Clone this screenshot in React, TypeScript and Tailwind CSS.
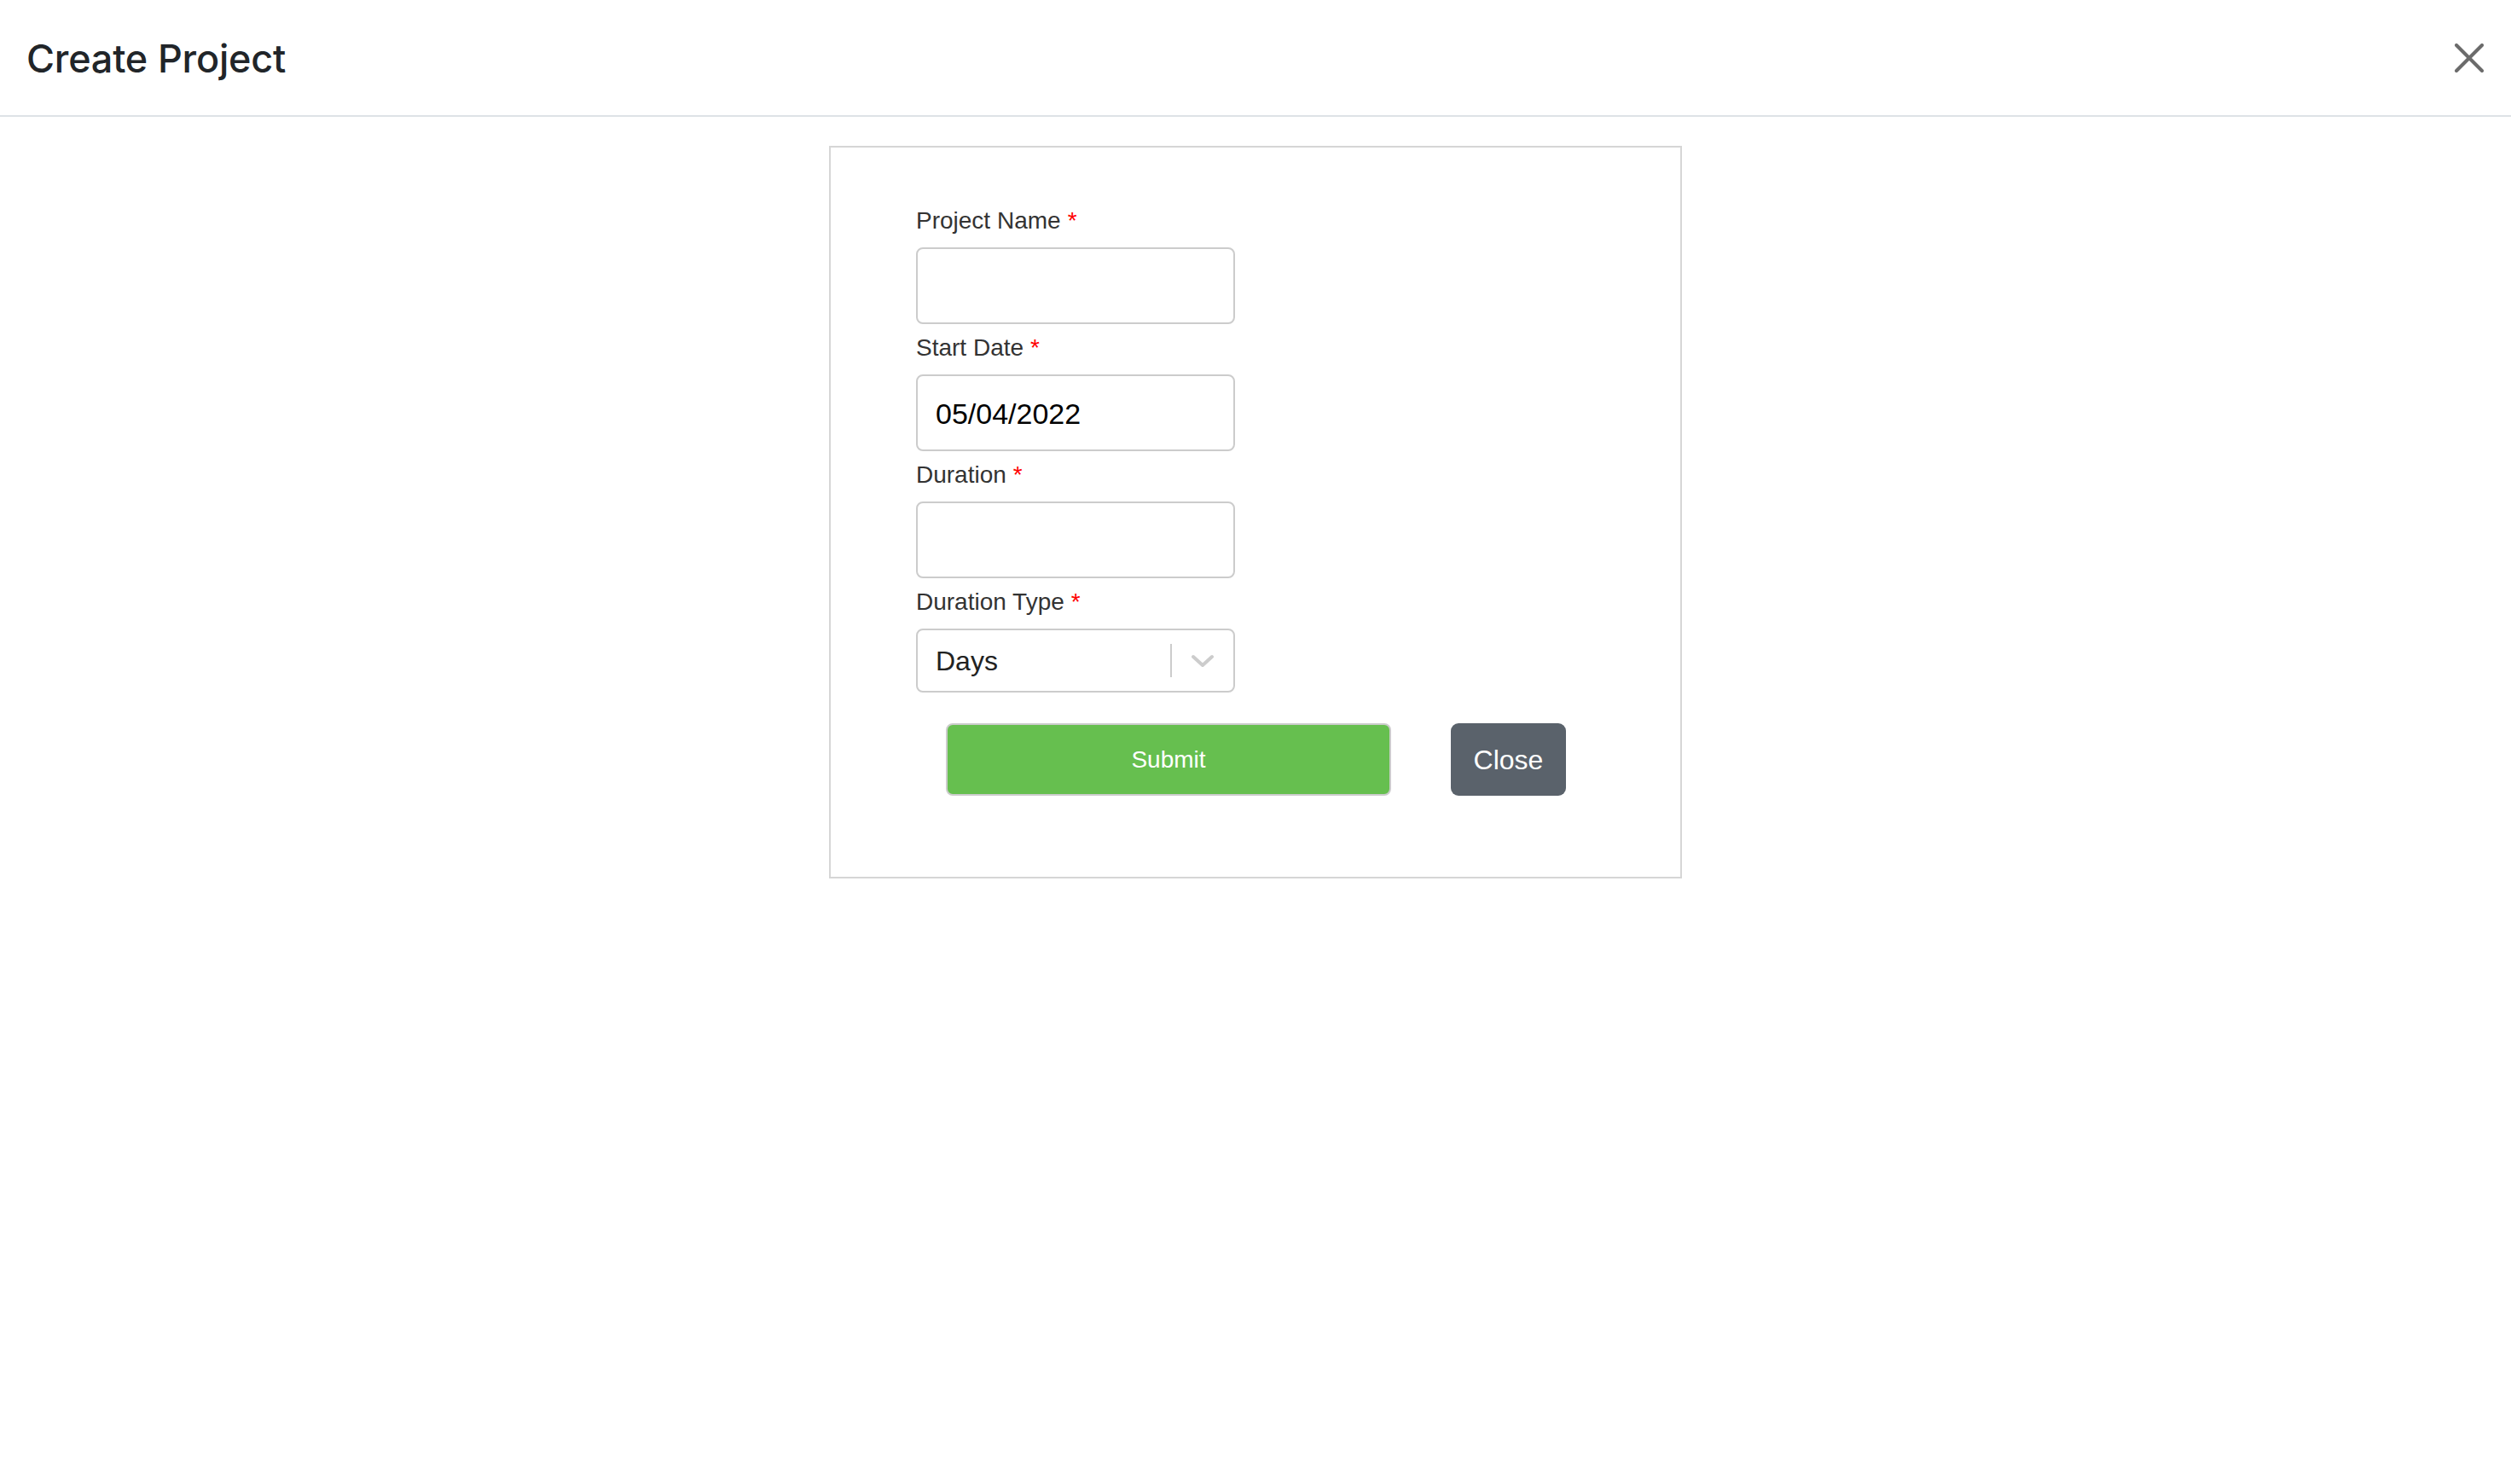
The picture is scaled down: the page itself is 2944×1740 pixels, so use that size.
import React from "react";

const labelFont = { fontFamily: '"Liberation Sans", Arial, sans-serif' };

function Label({ text }: { text: string }) {
  return (
    <div className="h-[59px] leading-[55px] text-[28px] text-[#333333] font-['Liberation_Sans',Arial,sans-serif] whitespace-nowrap">
      {text}
      <span className="text-[#ff0000] ml-[8px]">*</span>
    </div>
  );
}

function TextBox({ value }: { value?: string }) {
  return (
    <div className="h-[90px] w-[374px] border-2 border-[#cccccc] rounded-[8px] bg-white flex items-center pl-[21px] pt-[2px] text-[34px] text-black font-['Liberation_Sans',Arial,sans-serif]">
      {value}
    </div>
  );
}

export default function App() {
  return (
    <div className="min-h-screen w-full bg-white" style={labelFont}>
      <div className="h-[137px] border-b-2 border-[#dee2e6] flex items-center justify-between pl-[31px] pr-[32px] pt-[3px]">
        <div className="text-[45px] font-medium text-[#212529] font-['Inter',sans-serif] tracking-[-0.2px]">Create Project</div>
        <svg width="34" height="34" viewBox="0 0 34 34" className="mt-[-2px]">
          <line x1="2" y1="2" x2="32" y2="32" stroke="#6b6b6b" strokeWidth="4" strokeLinecap="round" />
          <line x1="32" y1="2" x2="2" y2="32" stroke="#6b6b6b" strokeWidth="4" strokeLinecap="round" />
        </svg>
      </div>

      <div className="mx-auto mt-[34px] w-[1000px] h-[859px] border-2 border-[#d6d6d6] pl-[100px] pt-[58px]">
        <Label text="Project Name" />
        <TextBox />
        <Label text="Start Date" />
        <TextBox value="05/04/2022" />
        <Label text="Duration" />
        <TextBox />
        <Label text="Duration Type" />
        <div className="h-[75px] w-[374px] border-2 border-[#cccccc] rounded-[8px] bg-white flex items-center">
          <div className="flex-1 pl-[21px] text-[32px] text-[#222222] font-['Liberation_Sans',Arial,sans-serif]">Days</div>
          <div className="w-[2px] h-[39px] bg-[#cccccc]" />
          <div className="w-[72px] flex items-center justify-center">
            <svg width="26" height="16" viewBox="0 0 26 16">
              <polyline points="2,3 13,13 24,3" fill="none" stroke="#cccccc" strokeWidth="4" strokeLinecap="round" strokeLinejoin="round" />
            </svg>
          </div>
        </div>

        <div className="flex items-start mt-[36px] pl-[35px] gap-[70px]">
          <button className="w-[522px] h-[85px] bg-[#66bf4f] border-2 border-[#cccccc] rounded-[8px] text-white text-[28px] font-['Liberation_Sans',Arial,sans-serif]">
            Submit
          </button>
          <button className="w-[135px] h-[85px] bg-[#5a626b] rounded-[9px] text-white text-[32px] font-['Liberation_Sans',Arial,sans-serif]">
            Close
          </button>
        </div>
      </div>
    </div>
  );
}
